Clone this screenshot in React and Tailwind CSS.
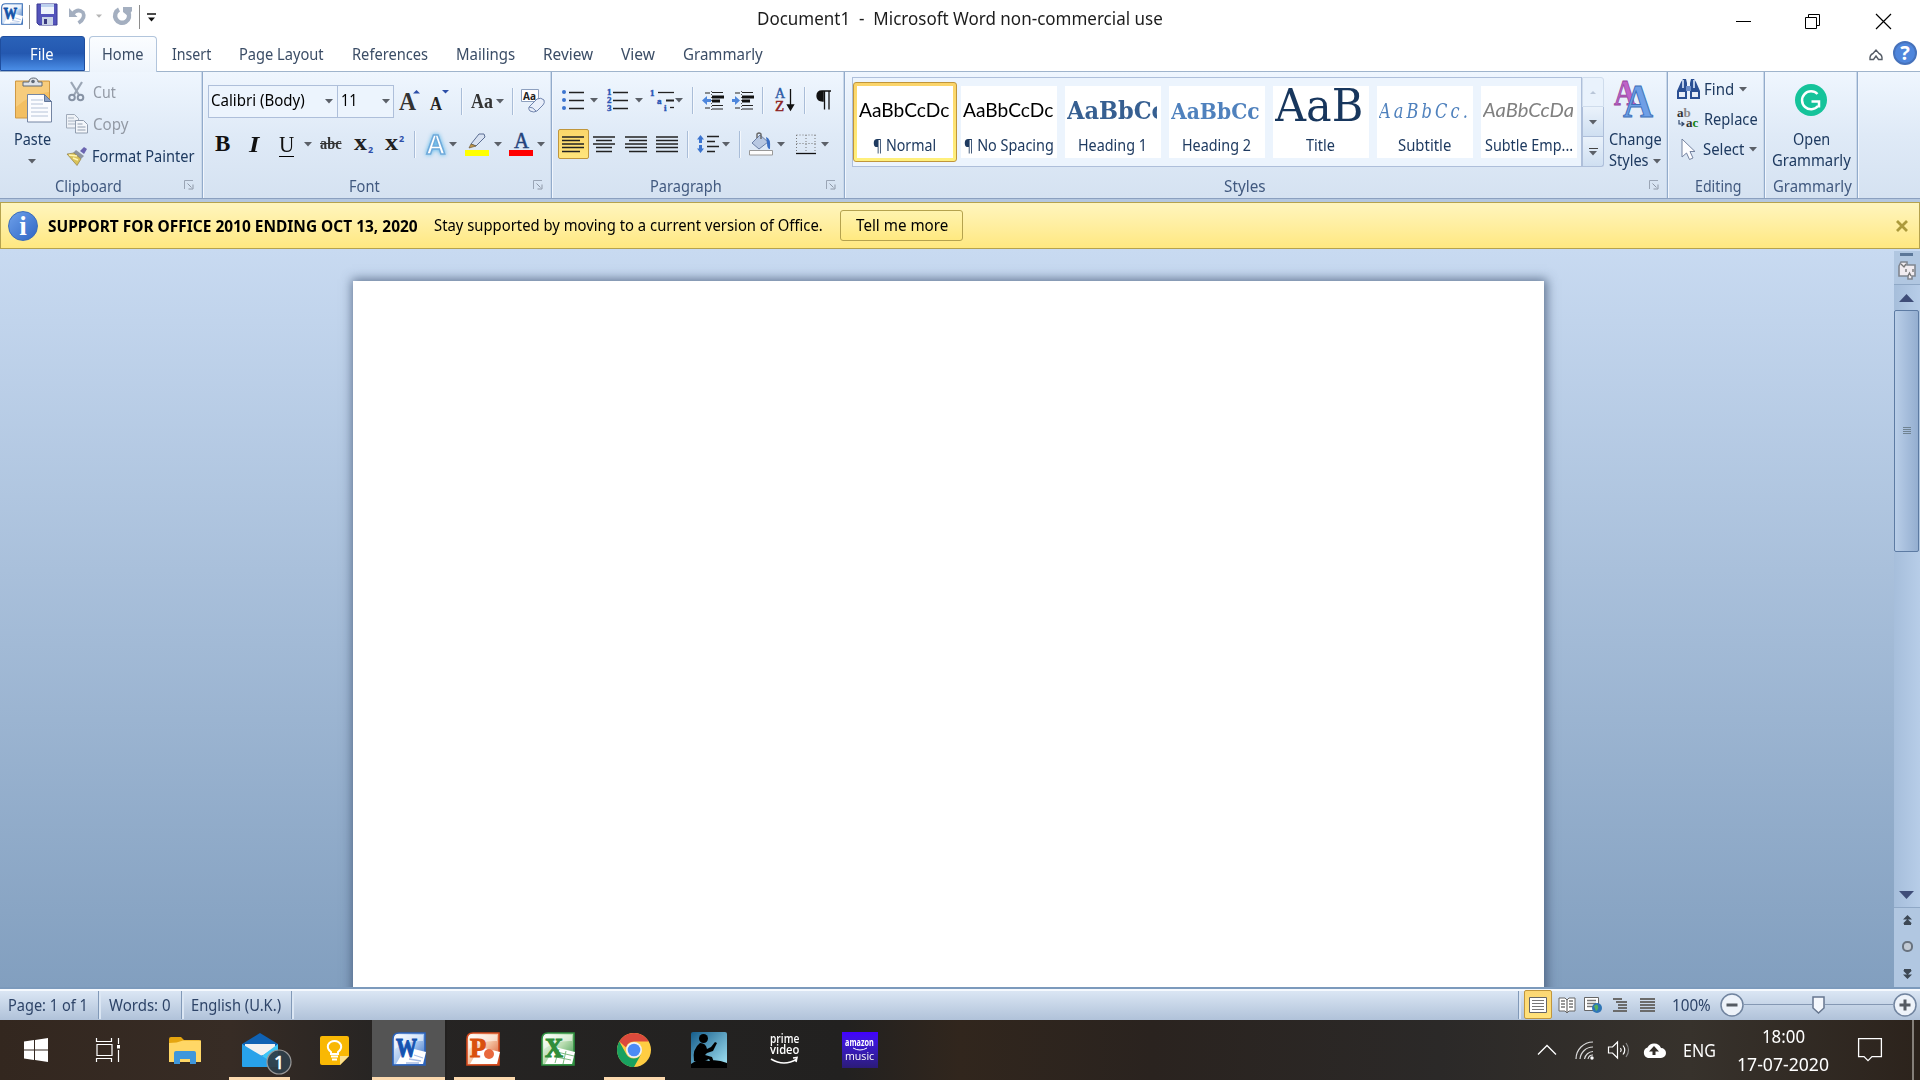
import { useLayoutEffect, useRef } from "react";

/* Single line of text condensed or widened to an exact width. */
function Fit({ w, className = "", children }) {
  const ref = useRef(null);
  useLayoutEffect(() => {
    const el = ref.current;
    el.style.transform = `scaleX(${w / el.offsetWidth})`;
  }, [w]);
  return (
    <span className="inline-block shrink-0 text-left" style={{ width: w }}>
      <span ref={ref} className={`inline-block origin-left whitespace-pre ${className}`}>{children}</span>
    </span>
  );
}

function Svg({ w, h, className = "", children }) {
  return (
    <svg width={w} height={h} viewBox={`0 0 ${w} ${h}`} className={`block shrink-0 overflow-visible ${className}`} fill="none">
      {children}
    </svg>
  );
}

const Arrow = ({ className = "", color = "#5b6068" }) => (
  <Svg w={8} h={4} className={className}><path d="M0 0h8L4 4.4z" fill={color} /></Svg>
);

const Sep = ({ className = "" }) => (
  <div className={`h-[27px] w-[2px] shrink-0 border-l border-[#a9bdd8] bg-[#f4f8fd] ${className}`} />
);

const Launcher = () => (
  <Svg w={10} h={10} className="ml-[9px] mt-[6px]">
    <path d="M.5 9V.5H9" stroke="#9aa5b5" />
    <path d="M3.5 3.5l4 4M9 4.5V9H4.5" stroke="#8d97a6" />
  </Svg>
);

function Group({ label, lw, width, launcher = true, nudge = "pl-[2px]", children }) {
  return (
    <section className={`flex h-[126px] shrink-0 flex-col border-r border-[#92abcb] shadow-[inset_-1px_0_0_#c9d8ea,1px_0_0_#f1f6fd] ${width}`}>
      <div className="h-[102px]">{children}</div>
      <div className="flex h-[24px]">
        <div className={`flex-1 text-center leading-[24px] text-[#41597f] ${nudge}`}><Fit w={lw}>{label}</Fit></div>
        {launcher && <div className="w-[27px]"><Launcher /></div>}
      </div>
    </section>
  );
}

const OfficeDoc = ({ letter, lw = 21, c1, c2, light, size = 34, children }) => (
  <svg width={size} height={size} viewBox="0 0 34 34" className="block shrink-0 overflow-visible">
    <defs>
      <linearGradient id={`g${letter}${size}`} x1="0" y1="0" x2="1" y2="1">
        <stop offset="0" stopColor="#fff" /><stop offset=".5" stopColor={light} /><stop offset="1" stopColor={c2} />
      </linearGradient>
    </defs>
    <path d="M7 1h26v32H1V7q0-6 6-6z" fill={`url(#g${letter}${size})`} stroke={c2} strokeWidth="1.6" />
    <path d="M3 17V8q0-5 5-5h23v6Q16 8 3 17z" fill="#fff" opacity=".5" />
    <path d="M14 15l20 5-3 12-27 0z" fill="#fff" />
    {children}
    <text x="4" y="24.500" fontFamily="Liberation Serif" fontWeight="bold" fontSize="27" textLength={lw} lengthAdjust="spacingAndGlyphs" fill={c1} stroke={c1} strokeWidth="1.2">{letter}</text>
  </svg>
);

const WordLines = () => <path d="M22 23l9 3M17 27l12 2M14 31h13" stroke="#a9bfe4" strokeWidth="1.3" />;

function TitleBar() {
  return (
    <header className="flex h-[36px] shrink-0 bg-white">
      <div className="flex w-[757px]">
        <div className="mt-[3px] ml-px"><OfficeDoc letter="W" c1="#1553a8" c2="#3a6fb7" light="#d4e3f7" size={22}><WordLines /></OfficeDoc></div>
        <div className="mt-[5px] ml-[6px] h-[24px] w-px bg-[#8c8c8c]" />
        <Svg w={22} h={22} className="mt-[3px] ml-[6px]">
          <path d="M1 1h20v21H3l-2-2z" fill="#5454bb" stroke="#3a3a93" />
          <path d="M5 1h13v10H5z" fill="#eef3fb" /><path d="M5 1h13v3H5z" fill="#bcd0ee" />
          <path d="M6 14h11v8H6z" fill="#c9d3e6" /><path d="M8 16h3v5H8z" fill="#3a3a80" />
        </Svg>
        <Svg w={17} h={16} className="mt-[8px] ml-[11px]">
          <path d="M4 5.500Q9 0 14 4.500Q17 10 9.500 15" stroke="#a4afc0" strokeWidth="3.600" />
          <path d="M0 0v9h8.500z" fill="#a4afc0" />
        </Svg>
        <Arrow color="#b5b5b5" className="mt-[14px] ml-[9px] scale-75" />
        <Svg w={18} h={18} className="mt-[7px] ml-[11px]">
          <path d="M5 2.500A7 7 0 1 0 14 5" stroke="#a4afc0" strokeWidth="4.400" />
          <path d="M9 0h9v4l-4 5-5-4z" fill="#a4afc0" />
        </Svg>
        <div className="mt-[5px] ml-[7px] h-[24px] w-px bg-[#8c8c8c]" />
        <Svg w={9} h={9} className="mt-[13px] ml-[7px]"><path d="M0 1h9" stroke="#111" strokeWidth="1.500" /><path d="M1 4.500h7L4.500 8.500z" fill="#111" /></Svg>
      </div>
      <div className="mt-[4px] text-[18px] leading-[28px] text-[#1c1c1c]"><Fit w={406}>{"Document1  -  Microsoft Word non-commercial use"}</Fit></div>
      <div className="ml-auto flex pt-[13px]">
        <Svg w={15} h={16}><path d="M0 8.500h15" stroke="#000" /></Svg>
        <Svg w={15} h={16} className="mr-[56px] ml-[54px]"><path d="M.5 4.500h11v11H.5zM3.500 4V1.500h11v11H12" stroke="#000" /></Svg>
        <Svg w={15} h={16} className="mr-[29px]"><path d="M0 1l15 15M15 1L0 16" stroke="#000" strokeWidth="1.200" /></Svg>
      </div>
    </header>
  );
}

const TABS = [["Insert", 39, 15], ["Page Layout", 85, 28], ["References", 76, 28], ["Mailings", 59, 28], ["Review", 50, 28], ["View", 34, 28], ["Grammarly", 80, 28]];

function TabRow() {
  return (
    <nav className="flex h-[36px] shrink-0 border-b border-[#9fb4cc] bg-white leading-[24px] text-[#3b4d66]">
      <div className="h-[35px] w-[85px] rounded-t-[3px] border border-[#1f4e9f] bg-gradient-to-b from-[#2a62b8] via-[#2458b0] to-[#4a8de6] pt-[5px] pr-[2px] text-center text-white"><Fit w={24}>File</Fit></div>
      <div className="ml-[4px] h-[36px] w-[68px] rounded-t-[4px] border border-b-0 border-[#b2c5dc] bg-gradient-to-b from-[#fbfdff] to-[#edf4fc] pt-[5px] text-center"><Fit w={42}>Home</Fit></div>
      {TABS.map(([t, w, gap]) => (
        <div key={t} className="pt-[6px]" style={{ marginLeft: gap }}><Fit w={w}>{t}</Fit></div>
      ))}
      <div className="ml-auto flex">
        <Svg w={14} h={12} className="mt-[13px] mr-[10px]"><path d="M4 4.500L7 1l3 3.500Q13.500 6 13 10.500H9.500L7 7l-2.500 3.500H1Q.5 6 4 4.500z" stroke="#555c66" strokeWidth="1.400" /></Svg>
        <div className="mt-[5px] mr-[3px] flex size-[24px] items-center justify-center rounded-full border-2 border-[#4672bb] bg-[#4f86dc] text-[20px] font-bold text-white">?</div>
      </div>
    </nav>
  );
}

function Clipboard() {
  return (
    <Group label="Clipboard" lw={67} width="w-[203px]">
      <div className="flex text-[#1e3a60]">
        <div className="w-[66px] pt-[5px]">
          <Svg w={41} h={47} className="ml-[14px]">
            <path d="M1.500 4h34v37h-34z" fill="#f3bf62" stroke="#cf9945" />
            <path d="M2 5h33v10Q18 16 2 30z" fill="#fad58d" opacity=".6" />
            <path d="M9 9V5h6q0-4 4.500-4T24 5h4v4z" fill="#dfe3e8" stroke="#5f6875" /><circle cx="19" cy="4.500" r="1.800" fill="#5f6875" />
            <path d="M13.500 17.500h17l7 7V45h-24z" fill="#fbfcff" stroke="#7485a2" />
            <path d="M30.500 17.500v7h7z" fill="#8ba0c2" stroke="#5f7498" />
            <path d="M17 23h12M17 27h12M17 31h17M17 35h17M17 39h17" stroke="#b6c3d8" />
          </Svg>
          <div className="mt-[3px] ml-[14px] leading-[24px]"><Fit w={37}>Paste</Fit></div>
          <Arrow className="mt-[8px] ml-[28px]" />
        </div>
        <div className="pt-[4px] leading-[24px]">
          <div className="flex h-[32px] items-center text-[#939aa5]">
            <Svg w={17} h={20} className="ml-[2px]"><path d="M3 0l8 13M14 0L6 13" stroke="#9ba6b5" strokeWidth="2.200" /><circle cx="4" cy="15.500" r="2.800" stroke="#8793a5" strokeWidth="2" /><circle cx="12.500" cy="15.500" r="2.800" stroke="#8793a5" strokeWidth="2" /></Svg>
            <span className="ml-[8px]"><Fit w={23}>Cut</Fit></span>
          </div>
          <div className="flex h-[32px] items-center text-[#939aa5]">
            <Svg w={22} h={20}>
              <path d="M.5.500h8l4 4V14H.5z" fill="#eef2f7" stroke="#a0abba" /><path d="M2 4h6M2 7h8M2 10h8" stroke="#a9b4c3" />
              <path d="M9.500 6.500h8l4 4V19h-12z" fill="#f4f7fb" stroke="#919dae" /><path d="M11.500 10h5M11.500 13h8M11.500 16h8" stroke="#919dae" />
            </Svg>
            <span className="ml-[5px]"><Fit w={35}>Copy</Fit></span>
          </div>
          <div className="flex h-[32px] items-center">
            <Svg w={20} h={19} className="ml-px"><path d="M13 4l4-4 3 2-3 5z" fill="#6a64b0" /><path d="M9 3l8 6-3 3-8-6z" fill="#8d94a0" /><path d="M0 7l7-1 7 6-4 6.500z" fill="#d9c25a" stroke="#87743a" strokeWidth=".6" /><path d="M2 8l8 1M6 11l5 2" stroke="#fff5b0" strokeWidth="1.500" /></Svg>
            <span className="ml-[5px] -mt-px"><Fit w={103}>Format Painter</Fit></span>
          </div>
        </div>
      </div>
    </Group>
  );
}

function FontGroup() {
  return (
    <Group label="Font" lw={31} width="w-[349px]">
      <div className="flex h-[46px] items-center pt-[12px]">
        <div className="ml-[5px] flex h-[33px] w-[130px] items-center border border-[#aebfda] bg-[#ecf4fd] pl-[2px] text-black"><span className="-mt-[3px]"><Fit w={94}>Calibri (Body)</Fit></span><Arrow className="ml-[20px]" /></div>
        <div className="-ml-px flex h-[33px] w-[57px] items-center border border-[#aebfda] bg-[#ecf4fd] pl-[3px] text-black"><span className="-mt-[3px]"><Fit w={16}>11</Fit></span><Arrow className="ml-[25px]" /></div>
        <Svg w={22} h={22} className="ml-[5px]"><text x="0" y="20" fontFamily="Liberation Serif" fontWeight="bold" fontSize="25" textLength="17" lengthAdjust="spacingAndGlyphs" fill="#333">A</text><path d="M14 3.500L17.500 0 21 3.500z" fill="#2c4ea8" /></Svg>
        <Svg w={20} h={22} className="ml-[9px]"><text x="0" y="20" fontFamily="Liberation Serif" fontWeight="bold" fontSize="19" textLength="12" lengthAdjust="spacingAndGlyphs" fill="#222">A</text><path d="M12 0h7l-3.500 3.500z" fill="#2c4ea8" /></Svg>
        <Sep className="ml-[11px]" />
        <span className="-mt-px ml-[8px] font-[Liberation_Serif] text-[22px] font-bold text-[#333]"><Fit w={22}>Aa</Fit></span><Arrow className="ml-[3px]" />
        <Sep className="ml-[8px]" />
        <Svg w={24} h={24} className="ml-[7px]"><path d="M.5.500h17v12H.5z" fill="#fff" stroke="#8da0bf" /><text x="2" y="11" fontFamily="Open Sans" fontWeight="bold" fontSize="10" fill="#222">Aa</text><path d="M8 18l8-8q4-2 7 1 1 3-1 5l-6 6q-3 2-7 0-2-2-1-4z" fill="#e9effa" stroke="#7084ad" /><path d="M8 18q4 0 7 4" stroke="#7084ad" /></Svg>
      </div>
      <div className="mt-[10px] flex h-[32px] items-center font-[Liberation_Serif] leading-[30px] text-[#111]">
        <span className="ml-[12px] text-[23px] font-bold"><Fit w={15}>B</Fit></span>
        <span className="ml-[19px] text-[24px] font-bold italic"><Fit w={10}>I</Fit></span>
        <span className="ml-[20px] text-[24px]"><Fit w={15} className="border-b-[1.5px] border-black leading-[23px]">U</Fit></span>
        <Arrow className="ml-[10px]" />
        <span className="ml-[8px] text-[17px] font-bold text-[#333]"><Fit w={22} className="line-through">abc</Fit></span>
        <Svg w={20} h={20} className="ml-[12px]"><text x="0" y="16" fontFamily="Liberation Serif" fontWeight="bold" fontSize="23" textLength="13" lengthAdjust="spacingAndGlyphs" fill="#222">x</text><text x="14" y="19" fontFamily="Open Sans" fontWeight="bold" fontSize="9" fill="#2c4ea8">2</text></Svg>
        <Svg w={20} h={20} className="ml-[11px]"><text x="0" y="16" fontFamily="Liberation Serif" fontWeight="bold" fontSize="23" textLength="13" lengthAdjust="spacingAndGlyphs" fill="#222">x</text><text x="14" y="8" fontFamily="Open Sans" fontWeight="bold" fontSize="9" fill="#2c4ea8">2</text></Svg>
        <Sep className="ml-[9px]" />
        <Svg w={24} h={24} className="ml-[8px]"><g fontFamily="Liberation Sans" fontWeight="bold" fontSize="27"><text x="2" y="22" fill="#fff" stroke="#6faadb" strokeWidth="1.500" className="drop-shadow-[0_0_2px_#58b6e8]">A</text></g></Svg>
        <Arrow className="ml-[1px]" />
        <Svg w={24} h={24} className="ml-[8px]"><path d="M0 18h24v6H0z" fill="#ff0" /><path d="M14 2l5 0 1 3-9 9-5-2z" fill="#d8e2f2" stroke="#5a6d92" /><path d="M6 12l5 2-7 2z" fill="#c69a4a" stroke="#6b5a3a" strokeWidth=".7" /></Svg>
        <Arrow className="ml-[5px]" />
        <Svg w={24} h={24} className="ml-[7px]"><text x="5" y="16" fontFamily="Liberation Serif" fontSize="23" textLength="15" lengthAdjust="spacingAndGlyphs" fill="#24437c" stroke="#24437c" strokeWidth=".5">A</text><path d="M0 18h24v6H0z" fill="#f00" /></Svg>
        <Arrow className="ml-[4px]" />
      </div>
    </Group>
  );
}

const Num = ({ y, children, x = 0 }) => <text x={x} y={y} fontFamily="Liberation Serif" fontWeight="bold" fontSize="9" fill="#2a55b5" stroke="#2a55b5" strokeWidth=".4">{children}</text>;

function Paragraph() {
  return (
    <Group label="Paragraph" lw={72} width="w-[293px]">
      <div className="flex h-[44px] items-center pt-[12px]">
        <Svg w={22} h={20} className="ml-[10px]"><path d="M7 2.500h15M7 10.500h15M7 18.500h15" stroke="#222" strokeWidth="1.300" /><g fill="#3b74cf"><circle cx="2" cy="2" r="2" /><circle cx="2" cy="10" r="2" /><circle cx="2" cy="18" r="2" /></g></Svg>
        <Arrow className="ml-[6px]" />
        <Svg w={21} h={20} className="ml-[9px]"><path d="M6 2.500h15M6 10.500h15M6 18.500h15" stroke="#222" strokeWidth="1.300" /><Num y={5}>1</Num><Num y={13}>2</Num><Num y={21}>3</Num></Svg>
        <Arrow className="ml-[7px]" />
        <Svg w={24} h={22} className="ml-[7px]"><path d="M8 3.500h16" stroke="#222" strokeWidth="1.300" /><path d="M16 11.500h8" stroke="#222" strokeWidth="2" /><path d="M20 18.500h4" stroke="#222" strokeWidth="1.300" /><Num y={7}>1</Num><Num y={15} x={7}>a</Num><Num y={22} x={14}>i</Num></Svg>
        <Arrow className="ml-[1px]" />
        <Sep className="ml-[9px]" />
        {["M0 10.500L5 6v3h4v3H5v3z", "M8 10.500L3 6v3H0v3h3v3z"].map((d, i) => (
          <Svg key={d} w={21} h={20} className={i ? "ml-[9px]" : "ml-[8px]"}><path d="M3 3h5M3 18h5M10 2.500h11" stroke="#222" strokeWidth="1.200" /><path d="M10 15.500h11M10 19h11" stroke="#222" strokeWidth="1.200" /><path d="M10 7h12M10 11h8" stroke="#111" strokeWidth="3" /><path d="M9.500 1v19" stroke="#555" strokeDasharray="1 2" /><path d={d} fill="#4d86dc" /></Svg>
        ))}
        <Sep className="ml-[9px]" />
        <Svg w={19} h={24} className="ml-[11px]"><text x="0" y="10" fontFamily="Liberation Serif" fontSize="14" fill="#2c5aa5" stroke="#2c5aa5" strokeWidth=".4">A</text><text x="0" y="23" fontFamily="Liberation Serif" fontSize="15" fill="#8d2424" stroke="#8d2424" strokeWidth=".5">Z</text><path d="M15.500 1v20M12.500 17l3 5 3-5z" stroke="#111" strokeWidth="1.300" fill="#111" /></Svg>
        <Sep className="ml-[10px]" />
        <Svg w={14} h={20} className="ml-[11px]"><path d="M14 1H5Q0 1 0 6t6 5V1zM7.500 1v18.500M12 1v18.500" fill="#111" stroke="#111" strokeWidth="1.300" /></Svg>
      </div>
      <div className="mt-[12px] flex h-[32px] items-center">
        <div className="ml-[6px] flex h-[30px] w-[31px] items-center justify-center rounded-[2px] border border-[#c0963c] bg-gradient-to-b from-[#fbd66a] to-[#ffe57c] pr-px"><Svg w={22} h={17}><path d="M0 1h22M0 4.500h18M0 8h22M0 11.500h22M0 15.500h18" stroke="#222" strokeWidth="1.400" /></Svg></div>
        <Svg w={22} h={17} className="ml-[4px]"><path d="M0 1h22M3 4.500h16M0 8h22M3 11.500h16M3 15.500h16" stroke="#222" strokeWidth="1.400" /></Svg>
        <Svg w={22} h={17} className="ml-[10px]"><path d="M0 1h22M4 4.500h18M0 8h22M0 11.500h22M4 15.500h18" stroke="#222" strokeWidth="1.400" /></Svg>
        <Svg w={22} h={17} className="ml-[9px]"><path d="M0 1h22M0 4.500h22M0 8h22M0 11.500h22M0 15.500h22" stroke="#222" strokeWidth="1.400" /></Svg>
        <Sep className="ml-[9px]" />
        <Svg w={22} h={18} className="ml-[8px]"><path d="M10 1.500h12M10 6.500h8M10 11.500h12M10 16.500h8" stroke="#222" strokeWidth="1.300" /><path d="M3.500 0L7 4.500H5V8H2V4.500H0zM3.500 18L7 13.500H5V10H2v3.500H0z" fill="#3b74cf" /></Svg>
        <Arrow className="ml-[3px]" />
        <Sep className="ml-[9px]" />
        <Svg w={24} h={24} className="ml-[8px]"><path d="M.5 18.500h23v4.500H.5z" fill="#fdfdfd" stroke="#999" /><path d="M3 11l8-8 8 7-9 7z" fill="#b8c8e2" stroke="#6c80a6" /><path d="M17 5q5 1 4 12-3 0-3-6z" fill="#3b6fc4" /><path d="M8 6V2q2-2 4 0v5" stroke="#666" strokeWidth="1.400" /></Svg>
        <Arrow className="ml-[4px]" />
        <Svg w={20} h={20} className="ml-[11px]"><path d="M.5 1h19M.5 9.500h19M.5 1v17M10 1v17M19 1v17" stroke="#777" strokeDasharray="1 2" /><path d="M0 19.500h20" stroke="#111" strokeWidth="1.300" /></Svg>
        <Arrow className="ml-[5px]" />
      </div>
    </Group>
  );
}

const STYLES = [
  ["¶ Normal", 63, "AaBbCcDc", 90, "font-[Lato] text-[20px] text-black leading-[47px]"],
  ["¶ No Spacing", 90, "AaBbCcDc", 90, "font-[Lato] text-[20px] text-black leading-[47px]"],
  ["Heading 1", 69, "AaBbCc", 98, "font-[DejaVu_Serif] font-bold text-[25px] text-[#365f91] leading-[50px]"],
  ["Heading 2", 69, "AaBbCc", 89, "font-[DejaVu_Serif] font-bold text-[23px] text-[#4f81bd] leading-[50px]"],
  ["Title", 29, "AaB", 88, "font-[DejaVu_Serif] text-[44px] text-[#17365d] leading-[39px]"],
  ["Subtitle", 53, "AaBbCc.", 92, "font-[DejaVu_Serif] italic text-[21px] text-[#4f81bd] leading-[50px] tracking-[4px]"],
  ["Subtle Emp...", 88, "AaBbCcDa", 91, "font-[Lato] italic text-[20px] text-[#808080] leading-[47px]"],
];

function Styles() {
  return (
    <Group label="Styles" lw={42} width="w-[823px]" nudge="pl-[4px]">
      <div className="flex pt-[5px] text-[#1e3a60]">
        <div className="ml-[7px] flex h-[90px] w-[730px] items-center border border-[#aebfda] bg-[#ecf4fd]">
          {STYLES.map(([name, nw, sample, sw, cls], i) => (
            <div key={name} className={i === 0 ? "h-[80px] w-[104px] rounded-[3px] border border-[#c0963c] bg-gradient-to-b from-[#fbd46a] to-[#fff07c] p-[3px]" : "h-[80px] w-[104px] p-[4px]"}>
              <div className="h-[72px] w-[96px] bg-white">
                <div className="mr-[4px] ml-[2px] h-[47px] w-[90px] overflow-hidden"><Fit w={sw} className={cls}>{sample}</Fit></div>
                <div className="pr-px text-center leading-[24px]"><Fit w={nw}>{name}</Fit></div>
              </div>
            </div>
          ))}
        </div>
        <div className="flex h-[90px] w-[22px] flex-col">
          <div className="flex h-[30px] items-center justify-center rounded-tr-[3px] border border-[#cfdcec] bg-[#e9f2fc]"><Svg w={6} h={3}><path d="M0 3l3-3 3 3z" fill="#b9c6d8" /></Svg></div>
          <div className="flex h-[30px] items-center justify-center border border-t-0 border-[#aebfda] bg-gradient-to-b from-[#eaf2fb] to-[#cfdff1]"><Arrow /></div>
          <div className="flex h-[30px] flex-col items-center justify-center rounded-br-[3px] border border-t-0 border-[#aebfda] bg-gradient-to-b from-[#eaf2fb] to-[#cfdff1]"><div className="mb-[2px] h-px w-[9px] bg-[#444]" /><Arrow /></div>
        </div>
        <div className="ml-[5px] w-[56px] leading-[21px]">
          <Svg w={40} h={38} className="mt-[3px] ml-[5px]"><g fontFamily="Liberation Serif" fontWeight="bold"><text x="0" y="25" fontSize="35" textLength="22" lengthAdjust="spacingAndGlyphs" fill="#c062c8" stroke="#94459d" strokeWidth=".8">A</text><text x="9" y="37" fontSize="47" textLength="30" lengthAdjust="spacingAndGlyphs" fill="#6f9fe6" stroke="#3c6fb8" strokeWidth="1">A</text></g></Svg>
          <div className="mt-[11px]"><Fit w={53}>Change</Fit></div>
          <div className="flex items-center"><Fit w={40}>Styles</Fit><Arrow className="ml-[4px]" /></div>
        </div>
      </div>
    </Group>
  );
}

function Editing() {
  return (
    <Group label="Editing" lw={47} width="w-[97px]" launcher={false} nudge="pl-[4px]">
      <div className="pt-[2px] leading-[24px] text-[#1e3a60]">
        <div className="flex h-[30px] items-center">
          <Svg w={23} h={20} className="ml-[9px]"><path d="M4 3l2-3h3l1 4v16H0v-8zM19 3l-2-3h-3l-1 4v16h10v-8z" fill="#2a4f93" /><path d="M2 13h6v5H2zM15 13h6v5h-6z" fill="#e8eef8" /><path d="M6 1v8M17 1v8" stroke="#b9cbe8" strokeWidth="2" /><path d="M9 7h5v5H9z" fill="#6e8fc9" /></Svg>
          <span className="ml-[4px]"><Fit w={30}>Find</Fit></span><Arrow className="ml-[5px]" />
        </div>
        <div className="flex h-[30px] items-center">
          <Svg w={23} h={22} className="ml-[9px]"><g fontFamily="Liberation Serif" fontWeight="bold" fontSize="13"><text x="0" y="9" fill="#333">a<tspan fill="#888">b</tspan></text><text x="9" y="19" fill="#333">a<tspan fill="#128212">c</tspan></text></g><path d="M2 12v4h4M4.500 14l2.500 2-2.500 2" stroke="#334a70" strokeWidth="1.200" /></Svg>
          <span className="ml-[4px]"><Fit w={54}>Replace</Fit></span>
        </div>
        <div className="flex h-[30px] items-center">
          <Svg w={14} h={22} className="ml-[13px]"><path d="M1 1v18l4.500-4 3 6.500 3.500-1.500-3-6.500h5z" fill="#fdfdff" stroke="#7583a0" /></Svg>
          <span className="ml-[8px]"><Fit w={41}>Select</Fit></span><Arrow className="ml-[5px]" />
        </div>
      </div>
    </Group>
  );
}

function GrammarlyGroup() {
  return (
    <Group label="Grammarly" lw={79} width="w-[93px]" launcher={false}>
      <div className="flex flex-col items-center pt-[12px] leading-[21px] text-[#1e3a60]">
        <Svg w={32} h={32}><circle cx="16" cy="16" r="16" fill="#15c39a" /><path d="M22.500 10A9 9 0 1 0 23 22M16.500 17.500h7.500v6" stroke="#fff" strokeWidth="2.500" /></Svg>
        <div className="mt-[13px]"><Fit w={37}>Open</Fit></div>
        <div><Fit w={79}>Grammarly</Fit></div>
      </div>
    </Group>
  );
}

function MessageBar() {
  return (
    <div className="flex h-[47px] shrink-0 items-center border border-[#b5a24e] bg-gradient-to-b from-[#fff5bd] to-[#ffe880] text-black">
      <div className="ml-[7px] flex size-[30px] items-center justify-center rounded-full border border-[#3a6cba] bg-gradient-to-br from-[#6ea0ea] to-[#2f66c4] font-[Liberation_Serif] text-[27px] leading-[28px] font-bold text-white">i</div>
      <span className="ml-[10px] font-bold"><Fit w={370}>SUPPORT FOR OFFICE 2010 ENDING OCT 13, 2020</Fit></span>
      <span className="-mt-px ml-[16px]"><Fit w={389}>Stay supported by moving to a current version of Office.</Fit></span>
      <button className="-mt-px ml-[17px] flex h-[31px] w-[123px] items-center justify-center rounded-[3px] border border-[#b5a24e] bg-gradient-to-b from-[#fff3ae] to-[#ffe980]"><Fit w={92}>Tell me more</Fit></button>
      <Svg w={12} h={12} className="mr-[11px] ml-auto"><path d="M1 1l10 10M11 1L1 11" stroke="#ac9a3c" strokeWidth="2.800" /></Svg>
    </div>
  );
}

function ScrollBar() {
  return (
    <div className="flex w-[26px] flex-col bg-[#b1c7e1]">
      <div className="h-[34px] border-b border-[#8fa8c6] pt-[2px]">
        <div className="ml-[6px] h-[3px] w-[13px] bg-[#5c7799]" />
        <Svg w={18} h={18} className="mt-[5px] ml-[4px]"><path d="M1 5l2-4h6v3h8v11h-3v3h-4v-3H1z" fill="#f1ecf0" stroke="#808690" strokeWidth="1.600" /><path d="M3 3l3 3 2-3M8 8v3M15 8v3M10 15l1.500-3 1.500 3" stroke="#777" strokeWidth="1.400" /></Svg>
      </div>
      <div className="flex h-[25px] items-center bg-gradient-to-r from-[#a6bedb] to-[#b7cde8] pl-[5px]"><Svg w={15} h={8}><path d="M0 8L7.500 0 15 8z" fill="#3f4d78" /></Svg></div>
      <div className="flex h-[242px] w-[25px] items-center justify-center rounded-[2px] border border-[#5d7ba3] bg-gradient-to-r from-[#b9cee8] to-[#94aed0]"><Svg w={8} h={8}><path d="M0 .5h8M0 2.500h8M0 4.500h8M0 6.500h8" stroke="#6f8291" /></Svg></div>
      <div className="flex-1 bg-gradient-to-r from-[#a6bedb] to-[#b7cde8]" />
      <div className="flex h-[25px] items-center border-b border-[#8fa8c6] bg-gradient-to-r from-[#a6bedb] to-[#b7cde8] pl-[5px]"><Svg w={15} h={8}><path d="M0 0h15L7.500 8z" fill="#3f4d78" /></Svg></div>
      <div className="flex h-[79px] flex-col items-center pt-[7px]">
        <Svg w={9} h={10}><path d="M0 4.500L4.500 0 9 4.500zM0 8.500L4.500 4 9 8.500zM1 8.500h7V10H1z" fill="#3d4854" /></Svg>
        <Svg w={11} h={11} className="mt-[16px]"><rect x="1" y="1" width="9" height="9" rx="4" fill="#c2cad4" stroke="#69737f" strokeWidth="2" /></Svg>
        <Svg w={9} h={10} className="mt-[17px]"><path d="M0 5.500L4.500 10 9 5.500zM0 1.500L4.500 6 9 1.500zM1 0h7v1.500H1z" fill="#3d4854" /></Svg>
      </div>
    </div>
  );
}

const Divider = ({ className = "" }) => <div className={`h-[28px] w-[3px] border-l border-[#8199b8] bg-[#dbe6f3] ${className}`} />;

const Knob = ({ plus }) => (
  <Svg w={24} h={24}><circle cx="12" cy="12" r="11" fill="#eef3fa" stroke="#71849f" strokeWidth="1.500" /><path d={plus ? "M6.500 12h11M12 6.500v11" : "M6.500 12h11"} stroke="#555b63" strokeWidth="3" /></Svg>
);

function StatusBar() {
  return (
    <footer className="flex h-[31px] shrink-0 items-center border-t-2 border-[#f5f9fe] bg-gradient-to-b from-[#dbe6f4] to-[#b0c2d9] pb-[2px] leading-[24px] text-[#2e4468]">
      <span className="ml-[8px]"><Fit w={80}>Page: 1 of 1</Fit></span>
      <Divider className="ml-[10px]" />
      <span className="ml-[8px]"><Fit w={62}>Words: 0</Fit></span>
      <Divider className="ml-[10px]" />
      <span className="ml-[7px]"><Fit w={90}>English (U.K.)</Fit></span>
      <Divider className="ml-[10px]" />
      <Divider className="mr-[3px] ml-auto" />
      <div className="flex h-[29px] w-[28px] items-center justify-center rounded-[2px] border border-[#c0963c] bg-gradient-to-b from-[#fcd774] to-[#ffe27a]"><Svg w={18} h={16}><path d="M.5.500h17v15H.5z" fill="#fff" stroke="#666" /><path d="M3 3.500h12M3 6.500h12M3 9.500h12M3 12.500h12" stroke="#777" /></Svg></div>
      <Svg w={16} h={16} className="ml-[7px]"><path d="M0 1l6 0 2 2 2-2h6v13h-6l-2 2-2-2H0z" fill="#fff" stroke="#666" /><path d="M2 4h4M2 7h4M2 10h4M10 4h4M10 7h4M10 10h4M8 3v12" stroke="#777" strokeWidth="1.300" /></Svg>
      <Svg w={18} h={16} className="ml-[9px]"><path d="M.5.500h14v13H.5z" fill="#fff" stroke="#666" /><path d="M3 3.500h9M3 6.500h9M3 9.500h6" stroke="#777" strokeWidth="1.300" /><circle cx="13" cy="11" r="5" fill="#2e75b6" /><path d="M10 9q3-3 4 0t-2 5z" fill="#58b05c" /></Svg>
      <Svg w={15} h={14} className="ml-[11px]"><path d="M0 1h9M3 4h11M5 7h9M5 10h9M0 13h14" stroke="#6b6b6b" strokeWidth="1.800" /></Svg>
      <Svg w={15} h={14} className="ml-[12px]"><path d="M0 1h15M0 4h15M0 7h15M0 10h15M0 13h15" stroke="#6b6b6b" strokeWidth="1.900" /></Svg>
      <span className="ml-[17px]"><Fit w={39}>100%</Fit></span>
      <div className="ml-[9px] flex items-center">
        <Knob />
        <div className="h-px w-[68px] bg-[#8598b3]" />
        <Svg w={13} h={18}><path d="M1 1h11v11l-5.500 5L1 12z" fill="#f4f7fc" stroke="#66768f" strokeWidth="1.500" /></Svg>
        <div className="h-px w-[68px] bg-[#8598b3]" />
        <Knob plus />
      </div>
      <div className="w-[3px]" />
    </footer>
  );
}

function Task({ run, active, children }) {
  return (
    <div className={`flex h-[60px] w-[75px] shrink-0 flex-col items-center ${active ? "border-r-2 border-[#22201f] bg-[#545454]" : ""}`}>
      <div className="flex h-[57px] items-center justify-center">{children}</div>
      {run && <div className={`h-[3px] bg-[#fbd9ae] ${active ? "w-full" : "w-[61px]"}`} />}
    </div>
  );
}

function Taskbar() {
  return (
    <div className="flex h-[60px] shrink-0 bg-[linear-gradient(90deg,#33271f_0%,#372c25_12%,#262423_20%,#222120_44%,#31261d_50%,#2a231f_60%,#2b2928_75%,#37322c_88%,#2c231c_100%)] text-white">
      <div className="flex w-[72px] items-center justify-center"><Svg w={24} h={24}><path d="M0 3.500L10 2v9.500H0zM11 1.900L24 0v11.500H11zM0 12.500h10V22L0 20.500zM11 12.500h13V24l-13-1.900z" fill="#fff" /></Svg></div>
      <div className="mr-[3px] flex w-[72px] items-center justify-center"><Svg w={24} h={24}><path d="M1 6.500h15v11H1zM.5 0v3.500h15V0M.5 24v-3.500h15V24M22.500 0v6M22.500 12v12" stroke="#fff" strokeWidth="1.200" /><path d="M21 7h3v3.500h-3z" fill="#fff" /></Svg></div>
      <Task><Svg w={32} h={27} className="mt-[4px]"><path d="M0 2Q0 0 2 0h10l3 3h15q2 0 2 2v20H0z" fill="#e5a50f" /><path d="M0 6q8 0 14-2.500h18V25H0z" fill="#ffd766" /><path d="M5 27V16q0-2 2-2h18q2 0 2 2v11h-6v-5H11v5z" fill="#3f97dc" /></Svg></Task>
      <Task run>
        <Svg w={36} h={34} className="mt-[2px]"><path d="M0 11L18 0l18 11v22H0z" fill="#0f62b4" /><path d="M3 11h30v8L18 23 3 17z" fill="#f1f1f1" /><path d="M0 11l20 12L36 12v21q0 1-1 1H1q-1 0-1-1z" fill="#28a2ea" /><path d="M20 23l16-12v22z" fill="#3cc6f7" /><circle cx="37" cy="29" r="12" fill="#2f3e49" fillOpacity=".95" stroke="#999" strokeWidth="1.200" /><text x="32" y="36" fontFamily="Noto Sans" fontSize="18" fill="#fff" stroke="#fff" strokeWidth=".6">1</text></Svg>
      </Task>
      <Task><Svg w={29} h={29} className="mt-[3px]"><path d="M2 0h25q2 0 2 2v18l-9 9H2q-2 0-2-2V2q0-2 2-2z" fill="#f9b804" /><path d="M29 20l-9 9v-9z" fill="#fbe08d" /><path d="M11 18v-2q-4-3-3-7 2-4 6.500-4T21 9q1 4-3 7v2zM11 20.500h7M12 23.500h5" stroke="#fff" strokeWidth="2" /></Svg></Task>
      <Task run active><OfficeDoc letter="W" c1="#1553b0" c2="#2a62bb" light="#a9c8f0"><WordLines /></OfficeDoc></Task>
      <Task run><div className="mr-[3px]"><OfficeDoc letter="P" lw={16} c1="#d9500e" c2="#d4481b" light="#f5c4a4"><circle cx="23" cy="22" r="5" fill="#e8683e" /></OfficeDoc></div></Task>
      <Task><div className="mr-[4px]"><OfficeDoc letter="X" lw={18} c1="#2f8d3a" c2="#2e9040" light="#b8dcb0"><path d="M16 20l17 4M15 25l15 3M18 17l-4 14M25 19l-3 13" stroke="#7cba80" /></OfficeDoc></div></Task>
      <Task run>
        <Svg w={34} h={34} className="mt-[3px] mr-[2px]"><circle cx="17" cy="17" r="17" fill="#ffcd42" /><path d="M2.300 8.500A17 17 0 0 1 31.700 8.500H17a8.500 8.500 0 0 0-8 6z" fill="#db4a3c" /><path d="M2.300 8.500A17 17 0 0 0 17 34l7-12.500a8.500 8.500 0 0 1-14.500 0z" fill="#19a15f" /><circle cx="17" cy="17" r="8" fill="#f1f1f1" /><circle cx="17" cy="17" r="6.300" fill="#4c8bf5" /></Svg>
      </Task>
      <Task>
        <Svg w={36} h={36} className="mt-[3px] mr-px"><defs><linearGradient id="sky" x1="0" y1="0" x2="1" y2="1"><stop stopColor="#155d8b" /><stop offset="1" stopColor="#a6e7f7" /></linearGradient></defs><rect width="36" height="36" rx="2" fill="url(#sky)" /><path d="M0 36v-4q8-6 18-3 8-2 18 2v5z" fill="#000" /><circle cx="12.500" cy="6.500" r="4.500" fill="#000" /><path d="M9 11q6 0 7 6l4-2 4-5 2 1-4 8-6 2-2 2 7 2 2 5-3 1-2-4-9 4-6-2Q1 17 9 11z" fill="#000" /></Svg>
      </Task>
      <Task>
        <div className="mt-[1px] flex flex-col font-[Open_Sans] text-[12px] font-semibold">
          <div className="flex h-[11px] items-center leading-[11px]"><Fit w={29}>prime</Fit></div>
          <div className="flex h-[11px] items-center leading-[11px]"><Fit w={29}>video</Fit></div>
          <Svg w={29} h={8} className="mt-[3px]"><path d="M1 1q13 8 26 0M23 0l4-.5L26 4" stroke="#fff" strokeWidth="1.600" /></Svg>
        </div>
      </Task>
      <Task>
        <div className="mt-[3px] flex size-[36px] flex-col items-center bg-gradient-to-b from-[#4300ff] to-[#2c1b78] pt-[5px] font-[Open_Sans]">
          <div className="flex h-[10px] items-center text-[10px] leading-[10px] font-bold"><Fit w={29}>amazon</Fit></div>
          <Svg w={14} h={2} className="mt-px"><path d="M0 0q7 4 14 0" stroke="#fff" /></Svg>
          <div className="flex h-[11px] items-center text-[11px] leading-[11px]"><Fit w={29}>music</Fit></div>
        </div>
      </Task>
      <div className="ml-auto flex items-center">
        <Svg w={18} h={10}><path d="M0 9.500l9-9 9 9" stroke="#fff" strokeWidth="1.300" /></Svg>
        <Svg w={19} h={19} className="ml-[19px]"><path d="M1 18A17 17 0 0 1 18 1M5 18A13 13 0 0 1 18 6M9.500 18A9 9 0 0 1 18 10.500M13 18a5 5 0 0 1 5-4" stroke="#ddd" strokeWidth="1.200" /><circle cx="17" cy="17" r="1.700" fill="#fff" /></Svg>
        <Svg w={23} h={18} className="ml-[14px]"><path d="M.5 6h4l5-5v16l-5-5h-4z" stroke="#fff" strokeWidth="1.200" /><path d="M12.500 7q1.500 2 0 4M15 4.500q3.500 4.500 0 9" stroke="#fff" strokeWidth="1.200" /><path d="M18 2q5 7 0 14" stroke="#888" strokeWidth="1.200" /></Svg>
        <Svg w={24} h={16} className="ml-[11px]"><path d="M6 16a5.500 5.500 0 0 1-.5-10.500A7.500 7.500 0 0 1 19 6a5 5 0 0 1 0 10z" fill="#fff" /><path d="M12 4l5 5.500h-3.500V13h-3V9.500H7z" fill="#35302b" /></Svg>
        <span className="ml-[17px] text-[18px]"><Fit w={33}>ENG</Fit></span>
        <div className="ml-[21px] flex w-[92px] flex-col items-center text-[18px] leading-[28px]"><Fit w={43}>18:00</Fit><Fit w={92}>17-07-2020</Fit></div>
        <Svg w={24} h={25} className="ml-[29px]"><path d="M.6.600h22.800v18H14l-4 4-4-4H.6z" stroke="#fff" strokeWidth="1.300" /></Svg>
        <div className="mr-[6px] ml-[30px] h-[60px] w-[2px] bg-[#857f79]" />
      </div>
    </div>
  );
}

export default function App() {
  return (
    <div className="flex h-[1080px] w-[1920px] flex-col overflow-hidden bg-[#b9cbe2] font-['Noto_Sans',sans-serif] text-[16px] leading-[24px]">
      <TitleBar />
      <TabRow />
      <div className="flex h-[127px] shrink-0 border-b border-[#8ba0bf] bg-gradient-to-b from-[#eff6fe] via-[#dfeaf7] to-[#d5e2f1]">
        <Clipboard />
        <FontGroup />
        <Paragraph />
        <Styles />
        <Editing />
        <GrammarlyGroup />
      </div>
      <div className="h-[3px] shrink-0 bg-[#b4c7df]" />
      <MessageBar />
      <main className="flex h-[740px] shrink-0 border-b-2 border-[#7c9abc] bg-gradient-to-b from-[#c8daf1] to-[#829fbf]">
        <div className="flex-1 overflow-hidden pt-[32px] pl-[353px]">
          <div className="h-[730px] w-[1191px] bg-white shadow-[1px_0_10px_2px_rgba(55,75,105,0.7)]" />
        </div>
        <div className="flex pt-[2px]"><ScrollBar /></div>
      </main>
      <StatusBar />
      <Taskbar />
    </div>
  );
}
